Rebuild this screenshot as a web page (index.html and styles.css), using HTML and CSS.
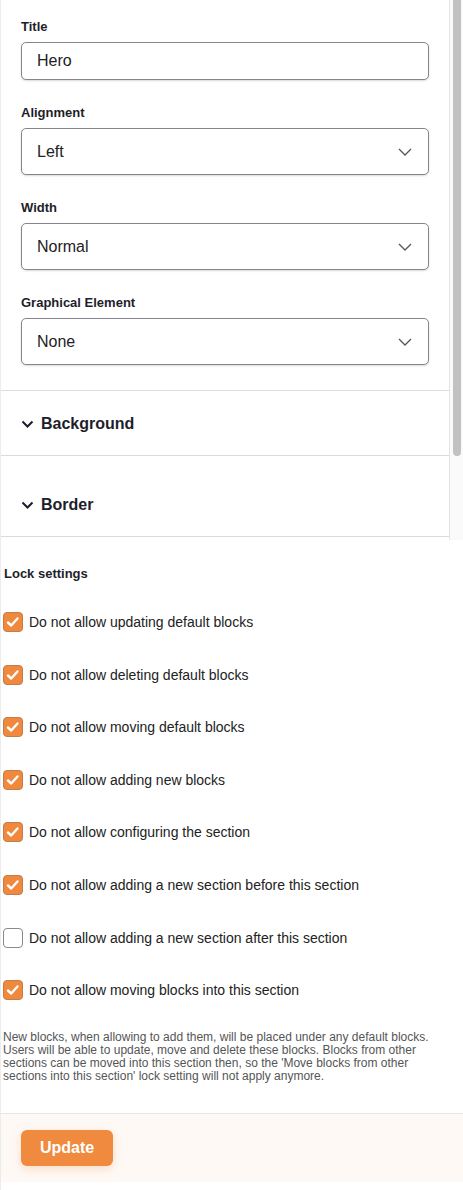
FILE: index.html
```html
<!DOCTYPE html>
<html lang="en">
<head>
    <meta charset="UTF-8">
    <meta name="viewport" content="width=device-width, initial-scale=1.0">
    <title>Section settings</title>
    <link rel="stylesheet" href="styles.css">
</head>
<body>
    <div class="page">
        <div class="scroller">
            <div class="panel">
                <div class="fields">
                    <label class="field-label" for="title">Title</label>
                    <input class="text-input" type="text" id="title" value="Hero">

                    <label class="field-label">Alignment</label>
                    <div class="select">
                        <span>Left</span>
                        <svg width="14" height="8" viewBox="0 0 14 8"><path d="M1 1l6 6 6-6" fill="none" stroke="#555" stroke-width="1.3"/></svg>
                    </div>

                    <label class="field-label">Width</label>
                    <div class="select">
                        <span>Normal</span>
                        <svg width="14" height="8" viewBox="0 0 14 8"><path d="M1 1l6 6 6-6" fill="none" stroke="#555" stroke-width="1.3"/></svg>
                    </div>

                    <label class="field-label">Graphical Element</label>
                    <div class="select">
                        <span>None</span>
                        <svg width="14" height="8" viewBox="0 0 14 8"><path d="M1 1l6 6 6-6" fill="none" stroke="#555" stroke-width="1.3"/></svg>
                    </div>
                </div>

                <div class="section-head bg-head">
                    <svg width="13" height="8" viewBox="0 0 13 8"><path d="M1.5 1.5l5 5 5-5" fill="none" stroke="#1e1e2a" stroke-width="2"/></svg>
                    Background
                </div>
                <div class="section-head border-head">
                    <svg width="13" height="8" viewBox="0 0 13 8"><path d="M1.5 1.5l5 5 5-5" fill="none" stroke="#1e1e2a" stroke-width="2"/></svg>
                    Border
                </div>
            </div>
            <div class="gutter">
                <div class="thumb"></div>
            </div>
        </div>

        <div class="lock">
            <h3>Lock settings</h3>
            <ul class="checks">
                <li><span class="box on"></span>Do not allow updating default blocks</li>
                <li><span class="box on"></span>Do not allow deleting default blocks</li>
                <li><span class="box on"></span>Do not allow moving default blocks</li>
                <li><span class="box on"></span>Do not allow adding new blocks</li>
                <li><span class="box on"></span>Do not allow configuring the section</li>
                <li><span class="box on"></span>Do not allow adding a new section before this section</li>
                <li><span class="box"></span>Do not allow adding a new section after this section</li>
                <li><span class="box on"></span>Do not allow moving blocks into this section</li>
            </ul>
            <p class="help">New blocks, when allowing to add them, will be placed under any default blocks. Users will be able to update, move and delete these blocks. Blocks from other sections can be moved into this section then, so the 'Move blocks from other<br>sections into this section' lock setting will not apply anymore.</p>
        </div>

        <div class="footer">
            <button class="update">Update</button>
        </div>
    </div>
</body>
</html>
```

FILE: styles.css
```css
body {
    margin: 0;
    font-family: 'Liberation Sans', Arial, sans-serif;
    background-color: #fff;
    color: #1e1e2a;
}

.page {
    border-left: 1px solid #ececec;
    height: 1190px;
}

.scroller {
    display: flex;
    height: 540px;
    overflow: hidden;
}

.panel {
    flex: 1;
}

.gutter {
    box-sizing: border-box;
    width: 14px;
    flex-shrink: 0;
    border-left: 1px solid #e4e4e4;
    background-color: #fafafa;
    padding: 0 2px 0 3px;
}

.thumb {
    height: 456px;
    background-color: #c1c1c1;
    border-radius: 0 0 4px 4px;
}

.fields {
    padding: 19px 20px 25px 20px;
    display: flex;
    flex-direction: column;
    border-bottom: 1px solid #dcdcdc;
}

.field-label {
    font-size: 13px;
    font-weight: bold;
    line-height: 16px;
    margin-bottom: 7px;
}

.text-input,
.select {
    box-sizing: border-box;
    width: 100%;
    border: 1px solid #85858f;
    border-radius: 5px;
    box-shadow: 0 1px 2px rgba(0, 0, 0, 0.15);
    font-family: inherit;
    font-size: 16px;
    color: #222;
    padding: 0 15px;
    margin-bottom: 25px;
    background-color: #fff;
}

.text-input {
    height: 38px;
}

.select {
    height: 47px;
    display: flex;
    align-items: center;
    justify-content: space-between;
}

.select svg {
    margin-right: 1px;
}

.fields .select:last-child {
    margin-bottom: 0;
}

.section-head {
    display: flex;
    align-items: center;
    gap: 7px;
    font-size: 16px;
    font-weight: bold;
    line-height: 20px;
    padding: 23px 20px 21px 20px;
    border-bottom: 1px solid #dcdcdc;
}

.border-head {
    padding: 39px 20px 21px 20px;
}

.lock {
    padding: 26px 2px 0 2px;
}

.lock h3 {
    margin: 0 0 30px 1px;
    font-size: 13px;
    line-height: 16px;
}

.checks {
    list-style: none;
    margin: 0;
    padding: 0;
    display: flex;
    flex-direction: column;
    gap: 32.6px;
}

.checks li {
    display: flex;
    align-items: center;
    gap: 6px;
    font-size: 14px;
    line-height: 20px;
    color: #222;
}

.box {
    box-sizing: border-box;
    width: 20px;
    height: 20px;
    border: 1px solid #8a8a8a;
    border-radius: 4px;
    background-color: #fff;
}

.box.on {
    border-color: #c27d4c;
    background-color: #f0883e;
    background-image: url("data:image/svg+xml,%3Csvg xmlns='http://www.w3.org/2000/svg' width='20' height='20' viewBox='0 0 20 20'%3E%3Cpath d='M5 10.5l3.2 3L14.5 6.5' fill='none' stroke='white' stroke-width='2.4' stroke-linecap='round' stroke-linejoin='round'/%3E%3C/svg%3E");
    background-position: center;
}

.help {
    margin: 31px 0 0 0;
    font-size: 12px;
    line-height: 13px;
    color: #555;
}

.footer {
    margin-top: 30px;
    border-top: 1px solid #e6e6e6;
    background-color: #fef9f5;
    height: 69px;
    padding: 16px 20px 0 20px;
    box-sizing: border-box;
}

.update {
    background-color: #ef8a3f;
    color: #fff;
    border: none;
    border-radius: 6px;
    font-family: inherit;
    font-size: 16px;
    font-weight: bold;
    height: 36px;
    padding: 0 19px;
    box-shadow: 0 3px 10px rgba(239, 138, 63, 0.25);
    cursor: pointer;
}
```
